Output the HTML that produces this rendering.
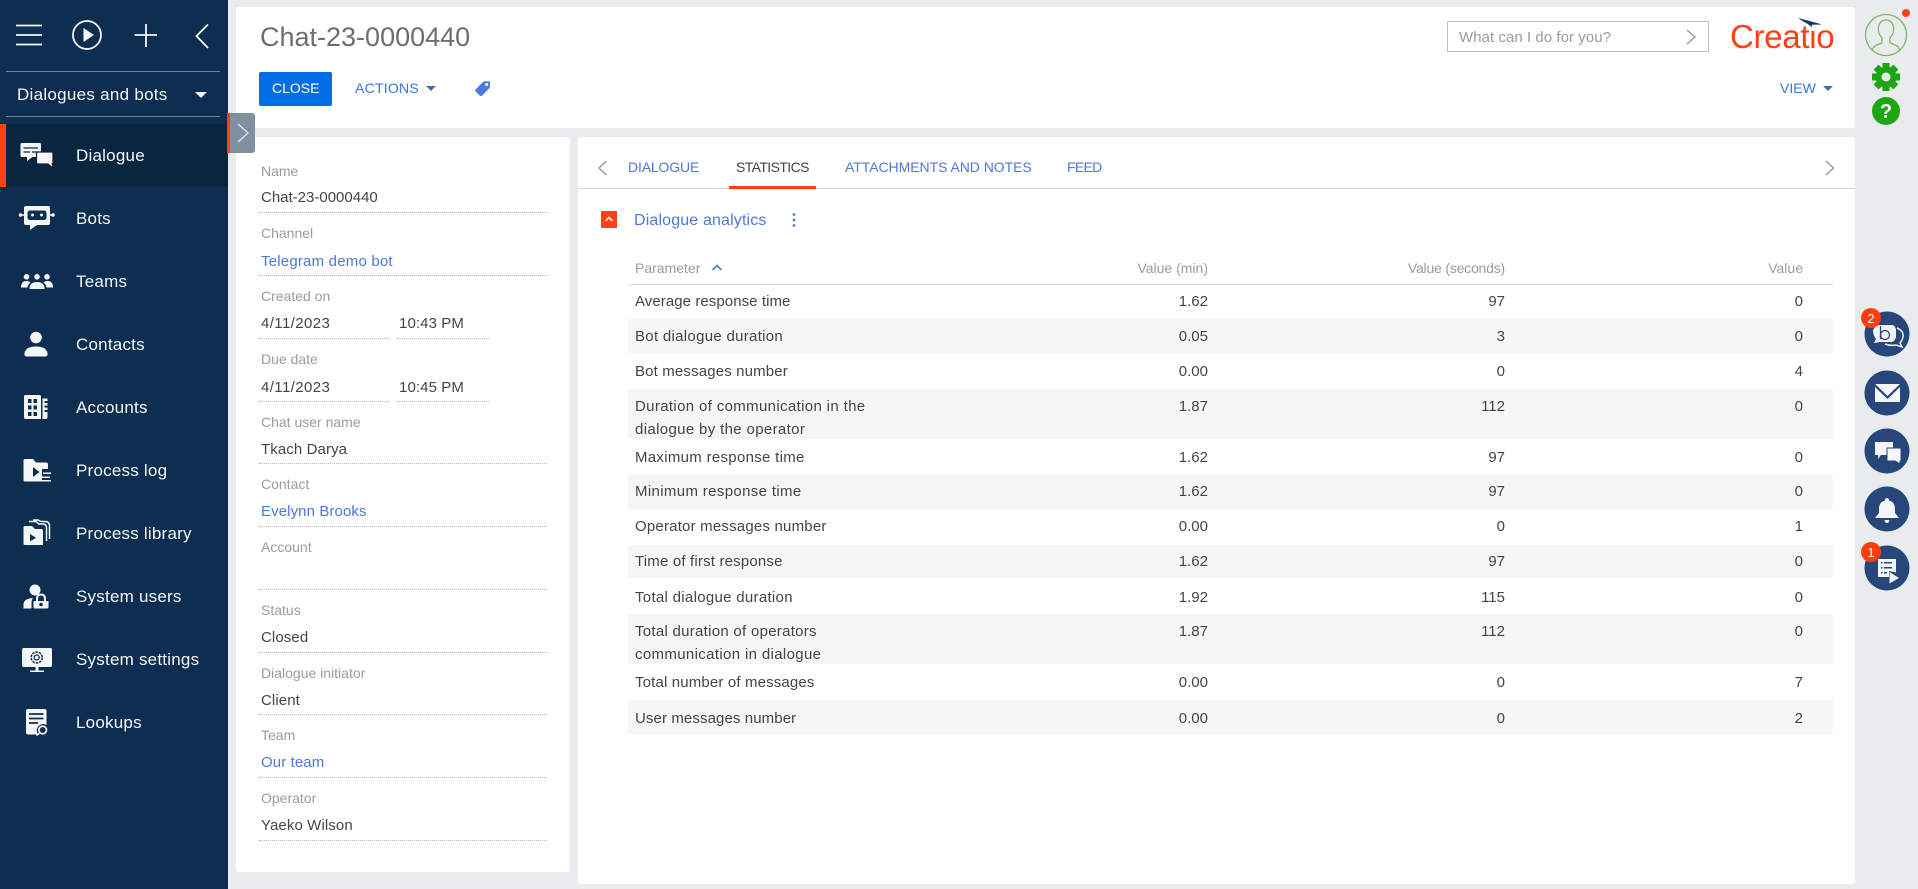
<!DOCTYPE html>
<html><head><meta charset="utf-8"><title>Chat-23-0000440</title>
<style>
html,body{margin:0;padding:0;width:1918px;height:889px;overflow:hidden;background:#e9eced;font-family:"Liberation Sans",Arial,sans-serif;color:#444}
div,span,svg{position:absolute}
.t{white-space:nowrap;line-height:20px;height:20px}
.s{left:76px;color:#f4f6f8;font-size:17px;letter-spacing:.22px}
.p{background:#fff;border-radius:3px}
.l{left:261px;font-size:14px;color:#9b9b9b}
.v{left:261px;font-size:15px;letter-spacing:.1px;color:#444}
.a{color:#4f76d8}
.d{height:0;border-top:1px dotted #b5b5b5}
.g{left:628px;width:1205px;background:#f6f6f6}
.c{left:635px;font-size:15px;letter-spacing:.35px;color:#444}
.r{text-align:right;width:100px;font-size:15px;color:#444}
.h{text-align:right;width:120px;font-size:14px;color:#9b9b9b}
.tab{font-size:14px;color:#4f76d8;letter-spacing:-.15px}
</style></head><body>

<div style="left:0;top:0;width:228px;height:889px;background:#0d2e50"></div>
<div style="left:0;top:124px;width:228px;height:63px;background:#0a2540"></div>
<div style="left:0;top:124px;width:6px;height:63px;background:#ff4013"></div>
<div style="left:6px;top:71px;width:214px;height:1px;background:#6d8095"></div>
<div style="left:6px;top:116px;width:214px;height:1px;background:#6d8095"></div>
<div class="t" style="left:17px;top:85px;font-size:17px;letter-spacing:.28px;color:#f4f6f8">Dialogues and bots</div>

<div class="t s" style="top:146px">Dialogue</div>
<div class="t s" style="top:209px">Bots</div>
<div class="t s" style="top:272px">Teams</div>
<div class="t s" style="top:335px">Contacts</div>
<div class="t s" style="top:398px">Accounts</div>
<div class="t s" style="top:461px">Process log</div>
<div class="t s" style="top:524px">Process library</div>
<div class="t s" style="top:587px">System users</div>
<div class="t s" style="top:650px">System settings</div>
<div class="t s" style="top:713px">Lookups</div>

<svg style="left:0;top:0" width="228" height="889" viewBox="0 0 228 889" fill="#f4f6f8">
<!-- top bar -->
<g fill="none" stroke="#f4f6f8" stroke-width="1.8">
<path d="M16 25.500H42M16 35H42M16 44.500H42"/>
<circle cx="87" cy="35" r="14"/>
<path d="M134.500 35H157M146 24V47"/>
<path d="M208 24.500L196.500 36L208 48"/>
</g>
<path d="M83.500 28V42L94 35Z"/>
<path d="M195 92H207L201 98Z"/>
<!-- dialogue -->
<path d="M22 143H39.500Q41 143 41 144.500V155.500Q41 157 39.500 157H32.500L27 161V157H22Q20.500 157 20.500 155.500V144.500Q20.500 143 22 143Z"/>
<path d="M23.500 148H38M23.500 152H30M32 152H38" stroke="#0a2540" stroke-width="1.300"/>
<path d="M37 152H51.500Q53 152 53 153.500V162.500Q53 164 51.500 164H52.500V168L48 164H38Q36.500 164 36.500 162.500V153.500Q36.500 152 38 152Z" stroke="#0a2540" stroke-width="1.200"/>
<!-- bots -->
<path d="M26 206H48Q50 206 50 208V223Q50 225 48 225H37L30 230V225H26Q24 225 24 223V208Q24 206 26 206Z"/>
<rect x="27.500" y="210.500" width="19" height="9.500" rx="2.500" fill="#0d2e50"/>
<circle cx="32.500" cy="215" r="1.500"/><circle cx="41.500" cy="215" r="1.500"/>
<circle cx="20.500" cy="215" r="1.800"/><circle cx="53" cy="215" r="1.800"/>
<path d="M20 214.300H25V215.700H20ZM49 214.300H53V215.700H49Z"/>
<!-- teams -->
<circle cx="26.500" cy="276.800" r="2.800"/><circle cx="37" cy="276.800" r="2.800"/><circle cx="47" cy="276.800" r="2.800"/>
<path d="M21 287.500Q21 281 26.500 281Q29 281 30.500 282.500Q28 284.500 27.500 287.500Z"/>
<path d="M29.500 289Q29.500 282 37 282Q44.500 282 44.500 289Z"/>
<path d="M43.500 282.500Q45 281 47.500 281Q53 281 53 287.500H46.500Q46 284.500 43.500 282.500Z"/>
<!-- contacts -->
<circle cx="36" cy="337.500" r="5.800"/>
<path d="M26.500 356.500Q24 356.500 24.500 353Q26 346.500 36 346.500Q46 346.500 47.500 353Q48 356.500 45.500 356.500Z"/>
<!-- accounts -->
<path d="M25.500 395H39.500Q41 395 41 396.500V419H25.500Q24 419 24 417.500V396.500Q24 395 25.500 395Z"/>
<path d="M28 399h3.500v4H28zM33.500 399h3.500v4h-3.500zM28 405.500h3.500v4H28zM33.500 405.500h3.500v4h-3.500zM28 412h3.500v4H28zM33.500 412h3.500v4h-3.500z" fill="#0d2e50"/>
<path d="M42.500 398.500H47.500V401H44.500V403H47.500V405.500H44.500V407.500H47.500V410H44.500V412H47.500V417Q47.500 419 45.500 419H42.500Z"/>
<!-- process log -->
<path d="M25 459H33L36 462.500H46Q48 462.500 48 464.500V469H42V481.500H25Q23.500 481.500 23.500 480V460.500Q23.500 459 25 459Z"/>
<path d="M33 467V477L39.500 472Z" fill="#0d2e50"/>
<path d="M43 472.500H51V474H43ZM41.500 476.500H50V478H41.500ZM41.500 480H51V481.500H41.500Z"/>
<!-- process library -->
<path d="M25 526H32L35 529H41Q43 529 43 531V545H25Q23.500 545 23.500 543.500V527.500Q23.500 526 25 526Z"/>
<path d="M30 534V541.500L36 537.750Z" fill="#0d2e50"/>
<path d="M29 521.500H36L39 524H43Q46.500 524 46.500 528V541M33 520H38L41 521.500H45Q49.500 521.500 49.500 526V539" fill="none" stroke="#f4f6f8" stroke-width="1.500"/>
<!-- system users -->
<circle cx="35" cy="590" r="5.500"/>
<path d="M23.500 608.500V604Q24 598.500 33 598Q31.500 600 31.500 603V608.500Z"/>
<path d="M33.500 601H48.500V607Q48.500 608.500 47 608.500H35Q33.500 608.500 33.500 607Z"/>
<path d="M37 601.500V599Q37 594.500 41 594.500Q45 594.500 45 599V601.500" fill="none" stroke="#f4f6f8" stroke-width="2"/>
<circle cx="41" cy="604.500" r="1.800" fill="#0d2e50"/>
<!-- system settings -->
<path d="M24 648H50.500Q52 648 52 649.500V665Q52 667 50.500 667H24Q22 667 22 665V649.500Q22 648 24 648Z"/>
<path d="M35.500 667h3v3.500h-3zM30 670.500h14v1.500H30z"/>
<circle cx="36.700" cy="657.500" r="5.500" fill="none" stroke="#0d2e50" stroke-width="1.500" stroke-dasharray="2.500 1"/>
<circle cx="36.700" cy="657.500" r="2.500" fill="none" stroke="#0d2e50" stroke-width="1.200"/>
<!-- lookups -->
<path d="M28 709H44.500Q46.500 709 46.500 711V725A6.500 6.500 0 0 0 38 734.500H28Q26 734.500 26 732.500V711Q26 709 28 709Z"/>
<path d="M29 714H43.500M29 718.500H43.500M29 723H38" stroke="#0d2e50" stroke-width="1.800"/>
<circle cx="42.700" cy="730" r="3.800" fill="none" stroke="#f4f6f8" stroke-width="1.700"/>
<path d="M39.500 733L36.500 735.500" stroke="#f4f6f8" stroke-width="1.700"/>
</svg>

<!-- panels -->
<div class="p" style="left:236px;top:7px;width:1619px;height:121px"></div>
<div class="p" style="left:236px;top:137px;width:334px;height:735px"></div>
<div class="p" style="left:578px;top:137px;width:1277px;height:747px"></div>

<!-- collapse tab -->
<div style="left:227px;top:113px;width:3px;height:40px;background:#ff4013"></div>
<div style="left:230px;top:113px;width:25px;height:40px;background:#7f91a1;border-radius:0 3px 3px 0"></div>
<svg style="left:236px;top:122px" width="14" height="22" viewBox="0 0 14 22"><path d="M2 2L12 11L2 20" fill="none" stroke="#e6eaee" stroke-width="1.200"/></svg>

<!-- header -->
<div class="t" style="left:260px;top:22px;height:30px;line-height:30px;font-size:27px;color:#6e6e6e">Chat-23-0000440</div>
<div style="left:259px;top:72px;width:73px;height:34px;background:#006fe6;border-radius:2px"></div>
<div class="t" style="left:272px;top:78px;font-size:14px;color:#fff">CLOSE</div>
<div class="t" style="left:355px;top:78px;font-size:14px;letter-spacing:.25px;color:#3a72e2">ACTIONS</div>
<svg style="left:425px;top:85px" width="12" height="7"><path d="M1 1H11L6 6Z" fill="#4a6aa5"/></svg>
<svg style="left:474px;top:80px" width="17" height="17" viewBox="0 0 17 17"><path d="M1.500 9.500L9 2Q9.800 1.300 11 1.300H15Q16 1.300 16 2.300V6.500Q16 7.500 15.300 8.300L8 15.800Q7 16.600 6 15.800L1.500 11.500Q.8 10.500 1.500 9.500Z" fill="#4f7bd9"/><circle cx="12.700" cy="4.500" r="1.500" fill="#fff"/></svg>
<div class="t" style="left:1780px;top:78px;font-size:14px;color:#3a72e2">VIEW</div>
<svg style="left:1822px;top:85px" width="12" height="7"><path d="M1 1H11L6 6Z" fill="#4a6aa5"/></svg>

<div style="left:1447px;top:21px;width:260px;height:29px;border:1px solid #c0c0c0"></div>
<div class="t" style="left:1459px;top:28px;font-size:15px;letter-spacing:.05px;color:#9b9b9b">What can I do for you?</div>
<svg style="left:1685px;top:28px" width="12" height="18"><path d="M2 2L10 9L2 16" fill="none" stroke="#999" stroke-width="1.400"/></svg>

<!-- logo -->
<div class="t" style="left:1730px;top:18px;height:38px;line-height:38px;font-size:33px;letter-spacing:-.3px;color:#ff4013">Creatio</div>
<div style="left:1809px;top:22px;width:9px;height:9px;background:#fff"></div>
<svg style="left:1795px;top:15px" width="30" height="16" viewBox="1795 15 30 16"><path d="M1798 18L1815 22.500L1822 24.500L1811.500 24.800L1812.500 27.500L1807 23.500Q1802 21 1798 18Z" fill="#18325f"/></svg>

<!-- form -->
<div class="t l" style="top:161px">Name</div>
<div class="t v" style="top:188px;letter-spacing:0">Chat-23-0000440</div>
<div class="d" style="left:259px;top:212px;width:288px"></div>
<div class="t l" style="top:223px">Channel</div>
<div class="t v a" style="top:252px;letter-spacing:.2px">Telegram demo bot</div>
<div class="d" style="left:259px;top:275px;width:288px"></div>
<div class="t l" style="top:286px">Created on</div>
<div class="t v" style="top:314px;letter-spacing:.4px">4/11/2023</div>
<div class="t v" style="left:399px;top:314px">10:43 PM</div>
<div class="d" style="left:259px;top:338px;width:130px"></div>
<div class="d" style="left:397px;top:338px;width:92px"></div>
<div class="t l" style="top:349px">Due date</div>
<div class="t v" style="top:378px;letter-spacing:.4px">4/11/2023</div>
<div class="t v" style="left:399px;top:378px">10:45 PM</div>
<div class="d" style="left:259px;top:401px;width:130px"></div>
<div class="d" style="left:397px;top:401px;width:92px"></div>
<div class="t l" style="top:412px">Chat user name</div>
<div class="t v" style="top:440px">Tkach Darya</div>
<div class="d" style="left:259px;top:463px;width:288px"></div>
<div class="t l" style="top:474px">Contact</div>
<div class="t v a" style="top:502px">Evelynn Brooks</div>
<div class="d" style="left:259px;top:526px;width:288px"></div>
<div class="t l" style="top:537px">Account</div>
<div class="d" style="left:259px;top:589px;width:288px"></div>
<div class="t l" style="top:600px">Status</div>
<div class="t v" style="top:628px">Closed</div>
<div class="d" style="left:259px;top:652px;width:288px"></div>
<div class="t l" style="top:663px">Dialogue initiator</div>
<div class="t v" style="top:691px">Client</div>
<div class="d" style="left:259px;top:714px;width:288px"></div>
<div class="t l" style="top:725px">Team</div>
<div class="t v a" style="top:753px">Our team</div>
<div class="d" style="left:259px;top:777px;width:288px"></div>
<div class="t l" style="top:788px">Operator</div>
<div class="t v" style="top:816px">Yaeko Wilson</div>
<div class="d" style="left:259px;top:840px;width:288px"></div>

<!-- tabs -->
<div style="left:578px;top:188px;width:1277px;height:1px;background:#d8d8d8"></div>
<svg style="left:596px;top:159px" width="13" height="18"><path d="M10.500 2L3 9L10.500 16" fill="none" stroke="#999" stroke-width="1.500"/></svg>
<svg style="left:1823px;top:159px" width="13" height="18"><path d="M3 2L10.500 9L3 16" fill="none" stroke="#999" stroke-width="1.500"/></svg>
<div class="t tab" style="left:628px;top:157px">DIALOGUE</div>
<div class="t tab" style="left:736px;top:157px;color:#444;letter-spacing:-.6px">STATISTICS</div>
<div class="t tab" style="left:845px;top:157px;letter-spacing:-.05px">ATTACHMENTS AND NOTES</div>
<div class="t tab" style="left:1067px;top:157px;letter-spacing:-.7px">FEED</div>
<div style="left:729px;top:186px;width:87px;height:3px;background:#ff4013"></div>

<!-- section -->
<div style="left:601px;top:211px;width:16px;height:17px;background:#ff4013"></div>
<svg style="left:601px;top:211px" width="16" height="17"><path d="M4.500 10L8 6.500L11.500 10" fill="none" stroke="#fff" stroke-width="1.500"/></svg>
<div class="t a" style="left:634px;top:211px;font-size:16px;letter-spacing:.15px">Dialogue analytics</div>
<svg style="left:792px;top:212px" width="4" height="16"><circle cx="2" cy="2.500" r="1.400" fill="#4f76d8"/><circle cx="2" cy="8" r="1.400" fill="#4f76d8"/><circle cx="2" cy="13.500" r="1.400" fill="#4f76d8"/></svg>

<!-- table -->
<div class="t" style="left:635px;top:258px;font-size:14px;color:#9b9b9b">Parameter</div>
<svg style="left:711px;top:263px" width="12" height="9"><path d="M1.500 7L6 2.500L10.500 7" fill="none" stroke="#4f7bd9" stroke-width="1.600"/></svg>
<div class="t h" style="left:1088px;top:258px">Value (min)</div>
<div class="t h" style="left:1385px;top:258px;letter-spacing:-.2px">Value (seconds)</div>
<div class="t h" style="left:1683px;top:258px">Value</div>
<div style="left:628px;top:284px;width:1205px;height:1px;background:#dcdcdc"></div>

<div class="g" style="top:319px;height:34px"></div>
<div class="g" style="top:389px;height:50px"></div>
<div class="g" style="top:475px;height:34px"></div>
<div class="g" style="top:545px;height:33px"></div>
<div class="g" style="top:614px;height:50px"></div>
<div class="g" style="top:700px;height:34px"></div>

<div class="t c" style="top:292px;letter-spacing:.07px">Average response time</div>
<div class="t c" style="top:327px;letter-spacing:.3px">Bot dialogue duration</div>
<div class="t c" style="top:362px;letter-spacing:.15px">Bot messages number</div>
<div class="t c" style="top:397px">Duration of communication in the</div>
<div class="t c" style="top:420px">dialogue by the operator</div>
<div class="t c" style="top:448px;letter-spacing:.3px">Maximum response time</div>
<div class="t c" style="top:482px">Minimum response time</div>
<div class="t c" style="top:517px;letter-spacing:.2px">Operator messages number</div>
<div class="t c" style="top:552px;letter-spacing:.18px">Time of first response</div>
<div class="t c" style="top:588px;letter-spacing:.3px">Total dialogue duration</div>
<div class="t c" style="top:622px;letter-spacing:.28px">Total duration of operators</div>
<div class="t c" style="top:645px">communication in dialogue</div>
<div class="t c" style="top:673px;letter-spacing:.15px">Total number of messages</div>
<div class="t c" style="top:709px;letter-spacing:.1px">User messages number</div>

<div class="t r" style="left:1108px;top:292px">1.62</div><div class="t r" style="left:1405px;top:292px">97</div><div class="t r" style="left:1703px;top:292px">0</div>
<div class="t r" style="left:1108px;top:327px">0.05</div><div class="t r" style="left:1405px;top:327px">3</div><div class="t r" style="left:1703px;top:327px">0</div>
<div class="t r" style="left:1108px;top:362px">0.00</div><div class="t r" style="left:1405px;top:362px">0</div><div class="t r" style="left:1703px;top:362px">4</div>
<div class="t r" style="left:1108px;top:397px">1.87</div><div class="t r" style="left:1405px;top:397px">112</div><div class="t r" style="left:1703px;top:397px">0</div>
<div class="t r" style="left:1108px;top:448px">1.62</div><div class="t r" style="left:1405px;top:448px">97</div><div class="t r" style="left:1703px;top:448px">0</div>
<div class="t r" style="left:1108px;top:482px">1.62</div><div class="t r" style="left:1405px;top:482px">97</div><div class="t r" style="left:1703px;top:482px">0</div>
<div class="t r" style="left:1108px;top:517px">0.00</div><div class="t r" style="left:1405px;top:517px">0</div><div class="t r" style="left:1703px;top:517px">1</div>
<div class="t r" style="left:1108px;top:552px">1.62</div><div class="t r" style="left:1405px;top:552px">97</div><div class="t r" style="left:1703px;top:552px">0</div>
<div class="t r" style="left:1108px;top:588px">1.92</div><div class="t r" style="left:1405px;top:588px">115</div><div class="t r" style="left:1703px;top:588px">0</div>
<div class="t r" style="left:1108px;top:622px">1.87</div><div class="t r" style="left:1405px;top:622px">112</div><div class="t r" style="left:1703px;top:622px">0</div>
<div class="t r" style="left:1108px;top:673px">0.00</div><div class="t r" style="left:1405px;top:673px">0</div><div class="t r" style="left:1703px;top:673px">7</div>
<div class="t r" style="left:1108px;top:709px">0.00</div><div class="t r" style="left:1405px;top:709px">0</div><div class="t r" style="left:1703px;top:709px">2</div>

<!-- right rail -->
<svg style="left:1856px;top:0" width="62" height="600" viewBox="1856 0 62 600">
<circle cx="1886" cy="35" r="20.500" fill="none" stroke="#84b765" stroke-width="1.300"/>
<path d="M1872 51Q1873 46 1878 44.500L1882 43V38Q1877.500 33 1878.500 27Q1880 20 1886 20Q1892 20 1893.500 27Q1894.500 33 1890 38V43L1894 44.500Q1899 46 1900 51" fill="none" stroke="#84b765" stroke-width="1.300"/>
<circle cx="1906" cy="13" r="4" fill="#ff4013"/>
<g fill="#1ea512">
<circle cx="1886" cy="77" r="10.500"/>
<rect x="1882.500" y="63" width="7" height="28"/>
<rect x="1872" y="73.500" width="28" height="7"/>
<rect x="1882.500" y="63" width="7" height="28" transform="rotate(45 1886 77)"/>
<rect x="1882.500" y="63" width="7" height="28" transform="rotate(-45 1886 77)"/>
<circle cx="1886" cy="111" r="14"/>
</g>
<circle cx="1886" cy="77" r="4.500" fill="#e9eced"/>
<text x="1886" y="118" text-anchor="middle" font-family="Liberation Sans" font-size="20" font-weight="bold" fill="#fff">?</text>
<g fill="#27477a">
<circle cx="1887" cy="334" r="22.500"/><circle cx="1887" cy="393" r="22.500"/><circle cx="1887" cy="451" r="22.500"/><circle cx="1887" cy="509" r="22.500"/><circle cx="1887" cy="568" r="22.500"/>
</g>
<!-- b chat -->
<path d="M1879 325H1892Q1895 325 1896 330V337Q1895 341 1892 342H1880L1874 343L1876 339Q1873 335 1873 331Q1874 326 1879 325Z" fill="#f2f4f7"/>
<path d="M1897 328Q1904 331 1903 337Q1902 341 1900 343L1902 347L1896 345Q1890 346 1885 344" fill="none" stroke="#f2f4f7" stroke-width="1.500"/>
<path d="M1880.500 326V339" fill="none" stroke="#27477a" stroke-width="1.300"/>
<circle cx="1885" cy="335" r="4.500" fill="none" stroke="#27477a" stroke-width="1.300"/>
<!-- mail -->
<path d="M1875 384H1900L1887.500 396Z" fill="#f4f6f8"/>
<path d="M1875 387L1887.500 399L1900 387V402H1875Z" fill="#f4f6f8"/>
<!-- chats -->
<path d="M1875 442H1893V455H1881L1878 459V455H1875Z" fill="#f4f6f8"/>
<path d="M1887 448H1901V461H1900V464L1895 461H1887Z" fill="#f4f6f8" stroke="#27477a" stroke-width="1"/>
<!-- bell -->
<path d="M1887 498Q1889 498 1889 500.500Q1895 502 1895 509V513L1899 518H1875L1879 513V509Q1879 502 1885 500.500Q1885 498 1887 498Z" fill="#f4f6f8"/>
<path d="M1884.500 520H1889.500Q1889 523 1887 523Q1885 523 1884.500 520Z" fill="#f4f6f8"/>
<!-- task -->
<path d="M1878 559H1896V572.500L1889 571V577H1878Z" fill="#f4f6f8"/>
<path d="M1881 562h1.500v1.500H1881zM1881 567h1.500v1.500H1881zM1881 572h1.500v1.500H1881zM1884 562h8v1.500h-8zM1884 567h8v1.500h-8zM1884 572h3v1.500h-3z" fill="#27477a"/>
<path d="M1889.500 572L1899 578L1889.500 583.500Z" fill="#f4f6f8"/>
<circle cx="1871" cy="318" r="10" fill="#ff3d0f"/>
<circle cx="1871" cy="552" r="10" fill="#ff3d0f"/>
<text x="1871" y="323" text-anchor="middle" font-family="Liberation Sans" font-size="13" fill="#fff">2</text>
<text x="1871" y="557" text-anchor="middle" font-family="Liberation Sans" font-size="13" fill="#fff">1</text>
</svg>
</body></html>
